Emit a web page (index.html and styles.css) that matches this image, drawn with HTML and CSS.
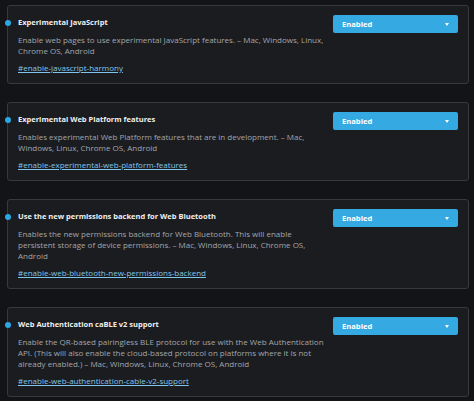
FILE: index.html
```html
<!DOCTYPE html>
<html>
<head>
<meta charset="utf-8">
<link rel="stylesheet" href="styles.css">
</head>
<body>
<div class="list">
  <div class="card">
    <span class="dot"></span>
    <div class="info">
      <div class="title">Experimental JavaScript</div>
      <div class="desc">Enable web pages to use experimental JavaScript features. – Mac, Windows, Linux,<br>Chrome OS, Android</div>
      <a class="link" href="#">#enable-javascript-harmony</a>
    </div>
    <div class="select"><span>Enabled</span><span class="arrow"></span></div>
  </div>
  <div class="card">
    <span class="dot"></span>
    <div class="info">
      <div class="title">Experimental Web Platform features</div>
      <div class="desc">Enables experimental Web Platform features that are in development. – Mac,<br>Windows, Linux, Chrome OS, Android</div>
      <a class="link" href="#">#enable-experimental-web-platform-features</a>
    </div>
    <div class="select"><span>Enabled</span><span class="arrow"></span></div>
  </div>
  <div class="card">
    <span class="dot"></span>
    <div class="info">
      <div class="title">Use the new permissions backend for Web Bluetooth</div>
      <div class="desc">Enables the new permissions backend for Web Bluetooth. This will enable<br>persistent storage of device permissions. – Mac, Windows, Linux, Chrome OS,<br>Android</div>
      <a class="link" href="#">#enable-web-bluetooth-new-permissions-backend</a>
    </div>
    <div class="select"><span>Enabled</span><span class="arrow"></span></div>
  </div>
  <div class="card">
    <span class="dot"></span>
    <div class="info">
      <div class="title">Web Authentication caBLE v2 support</div>
      <div class="desc">Enable the QR-based pairingless BLE protocol for use with the Web Authentication<br>API. (This will also enable the cloud-based protocol on platforms where it is not<br>already enabled.) – Mac, Windows, Linux, Chrome OS, Android</div>
      <a class="link" href="#">#enable-web-authentication-cable-v2-support</a>
    </div>
    <div class="select"><span>Enabled</span><span class="arrow"></span></div>
  </div>
</div>
</body>
</html>
```

FILE: styles.css
```css
html, body {
  margin: 0;
  padding: 0;
  background: #131417;
}
body {
  font-family: "Open Sans", "Noto Sans", sans-serif;
  font-size: 8px;
  color: #a3a6aa;
}
.list {
  display: flex;
  flex-direction: column;
  gap: 18px;
  padding: 5px 5px 0 7px;
}
.card {
  position: relative;
  display: grid;
  grid-template-columns: 1fr 125px;
  column-gap: 5px;
  align-items: start;
  background: #1b1c20;
  border: 1px solid #38393d;
  border-radius: 3px;
  padding: 9px 10px 10px 10px;
}
.dot {
  position: absolute;
  left: -3.5px;
  top: 13.5px;
  width: 6px;
  height: 6px;
  border-radius: 50%;
  background: #2ba7e4;
}
.info {
  display: flex;
  flex-direction: column;
  align-items: flex-start;
  white-space: nowrap;
}
.title {
  color: #f0f0f0;
  font-size: 7.5px;
  font-weight: 700;
  line-height: 14px;
}
.desc {
  margin-top: 5px;
  line-height: 11px;
}
.link {
  margin-top: 6px;
  line-height: 11px;
  color: #80c6ea;
  text-decoration: underline;
}
.select {
  height: 18px;
  box-sizing: border-box;
  background: #35a9e1;
  border-radius: 2px;
  display: flex;
  align-items: center;
  justify-content: space-between;
  padding: 0 9px 0 9px;
  color: #ffffff;
  font-size: 7.6px;
  font-weight: 700;
}
.arrow {
  width: 0;
  height: 0;
  border-left: 2.5px solid transparent;
  border-right: 2.5px solid transparent;
  border-top: 3px solid #ffffff;
}
```
